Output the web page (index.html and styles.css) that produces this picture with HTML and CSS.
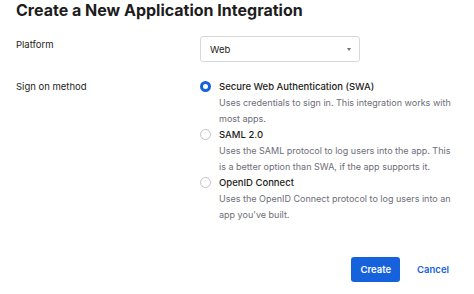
FILE: index.html
```html
<!DOCTYPE html>
<html lang="en">
<head>
    <meta charset="UTF-8">
    <title>Create a New Application Integration</title>
    <link rel="stylesheet" href="styles.css">
</head>
<body>

<div class="page">
    <h1 class="title">Create a New Application Integration</h1>

    <div class="form-row row-platform">
        <label class="row-label">Platform</label>
        <div class="select">
            <span>Web</span>
            <span class="caret"></span>
        </div>
    </div>

    <div class="form-row row-method">
        <label class="row-label">Sign on method</label>
        <div class="radio-list">
            <div class="radio-item">
                <span class="radio checked"></span>
                <div class="radio-text">
                    <div class="radio-label">Secure Web Authentication (SWA)</div>
                    <div class="radio-desc">Uses credentials to sign in. This integration works with most apps.</div>
                </div>
            </div>
            <div class="radio-item">
                <span class="radio"></span>
                <div class="radio-text">
                    <div class="radio-label">SAML 2.0</div>
                    <div class="radio-desc">Uses the SAML protocol to log users into the app. This is a better option than SWA, if the app supports it.</div>
                </div>
            </div>
            <div class="radio-item">
                <span class="radio"></span>
                <div class="radio-text">
                    <div class="radio-label">OpenID Connect</div>
                    <div class="radio-desc">Uses the OpenID Connect protocol to log users into an app you've built.</div>
                </div>
            </div>
        </div>
    </div>

    <div class="actions">
        <button class="btn btn-primary">Create</button>
        <button class="btn btn-link">Cancel</button>
    </div>
</div>

</body>
</html>
```

FILE: styles.css
```css
body {
    margin: 0;
    background: #fff;
    font-family: 'Inter', 'Liberation Sans', sans-serif;
    color: #1d1d21;
}
.page {
    padding: 0 16px;
}
.title {
    margin: 0;
    font-size: 16px;
    line-height: 20px;
    font-weight: 700;
}
.form-row {
    display: flex;
}
.row-label {
    width: 184px;
    flex: none;
    font-size: 9.5px;
}
.row-platform {
    margin-top: 16px;
}
.row-platform .row-label {
    line-height: 18px;
}
.select {
    width: 160px;
    height: 26px;
    box-sizing: border-box;
    border: 1px solid #d7d7dc;
    border-radius: 3px;
    display: flex;
    align-items: center;
    justify-content: space-between;
    padding: 0 8px 0 9px;
    font-size: 9.5px;
}
.caret {
    width: 0;
    height: 0;
    border-left: 2.5px solid transparent;
    border-right: 2.5px solid transparent;
    border-top: 3px solid #6e6e78;
}
.row-method {
    margin-top: 17px;
}
.row-method .row-label {
    line-height: 16px;
}
.radio-list {
    flex: 1;
}
.radio-item {
    display: flex;
    gap: 8px;
}
.radio {
    width: 11px;
    height: 11px;
    box-sizing: border-box;
    border: 1px solid #c4c4ca;
    border-radius: 50%;
    margin-top: 2px;
    flex: none;
}
.radio.checked {
    border: 3.5px solid #1662dd;
}
.radio-label {
    font-size: 9.5px;
    line-height: 16px;
    font-weight: 500;
}
.radio-desc {
    font-size: 9px;
    line-height: 16px;
    color: #6e6e78;
    width: 240px;
}
.actions {
    display: flex;
    justify-content: flex-end;
    align-items: center;
    gap: 6px;
    margin-top: 34px;
}
.btn {
    font-family: inherit;
    font-size: 9.5px;
    font-weight: 600;
    border: none;
    border-radius: 3px;
    height: 25px;
    padding: 0 9px;
    cursor: pointer;
}
.btn-primary {
    background: #1662dd;
    color: #fff;
}
.btn-link {
    background: none;
    color: #1662dd;
    padding: 0 9px 0 11px;
}
```
